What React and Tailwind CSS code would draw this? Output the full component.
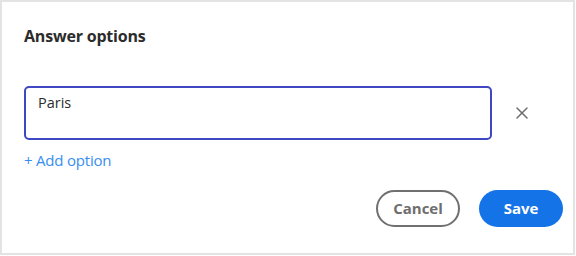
import { X } from 'lucide-react';

export default function App() {
  return (
    <div className="w-[575px] h-[255px] bg-white border-2 border-[#e3e3e3] box-border flex flex-col pl-[22px] pr-[10px] pt-[22px]" style={{ fontFamily: '"Open Sans", "Noto Sans", sans-serif' }}>
      <h2 className="text-[16px] leading-6 font-bold text-[#2c2c2c] tracking-[-0.2px]">Answer options</h2>

      <div className="mt-[38px] flex items-center">
        <div className="w-[468px] h-[54px] border-2 border-[#3f47c3] rounded-[5px] px-3 pt-[5px] text-[14.5px] text-[#2c2c2c] leading-5">
          Paris
        </div>
        <button className="ml-[19px] text-[#6e6e6e] flex items-center justify-center w-[22px] h-[22px]">
          <X size={20} strokeWidth={1.8} />
        </button>
      </div>

      <button className="mt-[10px] self-start text-[15px] leading-5 text-[#378ef0] tracking-[-0.2px]">+ Add option</button>

      <div className="mt-[20px] flex justify-end gap-[19px]">
        <button className="w-[84px] h-[37px] rounded-full border-2 border-[#707070] text-[#6e6e6e] text-[15px] font-bold">Cancel</button>
        <button className="w-[84px] h-[37px] rounded-full bg-[#1473e6] text-white text-[15px] font-bold">Save</button>
      </div>
    </div>
  );
}
